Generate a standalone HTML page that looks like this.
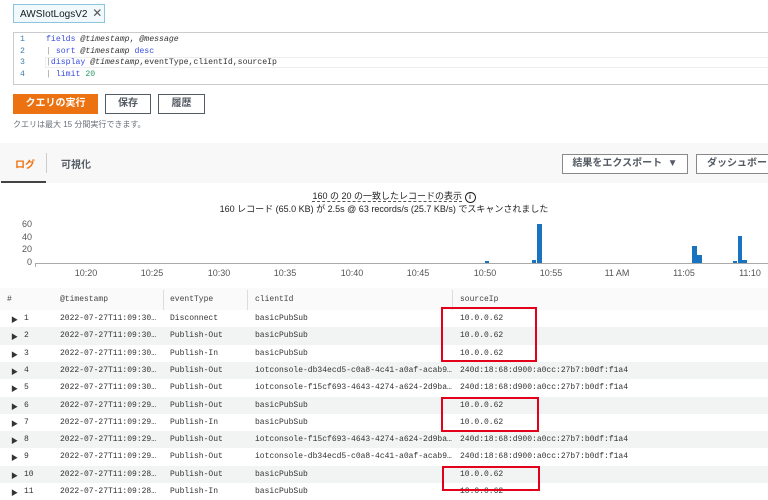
<!DOCTYPE html><html><head><meta charset="utf-8"><style>
body{margin:0;width:768px;height:493px;overflow:hidden;background:#fff;font-family:"Liberation Sans","Noto Sans CJK JP",sans-serif;position:relative;color:#16191f}
.a{position:absolute;white-space:nowrap}
.mono{font-family:"Liberation Mono","Noto Sans CJK JP",monospace}
.btn{position:absolute;border:1px solid #545b64;background:#fff;font-size:10px;font-weight:bold;color:#545b64;text-align:center;box-sizing:border-box;white-space:nowrap;overflow:hidden}
.row{position:absolute;left:0;width:768px;height:17.3px;font-size:8px;color:#333}
.row span{position:absolute;top:4px;white-space:nowrap}
.row span.t{font-size:7px;top:5px;left:11px}
.row span.n{left:24px}
.g{background:#f2f3f3}
.red{position:absolute;border:2px solid #e2001a;box-sizing:border-box}
.yl{position:absolute;left:18px;font-size:9px;color:#555;width:14px;text-align:right}
.xl{position:absolute;top:268px;font-size:9px;color:#555;width:40px;text-align:center}
.bar{position:absolute;background:#1a73c1}
</style></head><body>
<div class="a" style="left:13px;top:4px;width:92px;height:19px;border:1px solid #8cc4e0;background:#f1f9fd;box-sizing:border-box;font-size:10px;line-height:17px;padding-left:6px">AWSIotLogsV2 <span style="font-size:12px;color:#555;margin-left:2px">✕</span></div>
<div class="a" style="left:13px;top:32px;width:760px;height:53px;border:1px solid #c9cccf;box-sizing:border-box"></div>
<div class="a" style="left:45px;top:57px;width:723px;height:11px;border:1px solid #eee;border-right:none;box-sizing:border-box"></div>
<div class="a mono" style="left:20px;top:34px;font-size:8.2px;line-height:11.7px;color:#3f7cac">1<br>2<br>3<br>4</div>
<div class="a mono" style="left:46px;top:34px;font-size:8.2px;line-height:11.7px;color:#333;white-space:pre"><span style="color:#3b4ee0">fields</span> <i>@timestamp</i>, <i>@message</i>
<span style="color:#999">|</span> <span style="color:#3b4ee0">sort</span> <i>@timestamp</i> <span style="color:#3b4ee0">desc</span>
<span style="color:#999">|</span><span style="color:#3b4ee0">display</span> <i>@timestamp</i>,eventType,clientId,sourceIp
<span style="color:#999">|</span> <span style="color:#3b4ee0">limit</span> <span style="color:#2a9a6a">20</span></div>
<div class="btn" style="left:13px;top:94px;width:85px;height:20px;background:#ec7211;border-color:#ec7211;color:#fff;line-height:18px">クエリの実行</div>
<div class="btn" style="left:105px;top:94px;width:46px;height:20px;line-height:18px">保存</div>
<div class="btn" style="left:158px;top:94px;width:47px;height:20px;line-height:18px">履歴</div>
<div class="a" style="left:13px;top:119px;font-size:8px;color:#687078">クエリは最大 15 分間実行できます。</div>
<div class="a" style="left:0;top:143px;width:768px;height:40px;background:#f8f8f8"></div>
<div class="a" style="left:15px;top:156px;font-size:10px;font-weight:bold;color:#ec7211">ログ</div>
<div class="a" style="left:46px;top:153px;width:1px;height:20px;background:#ccc"></div>
<div class="a" style="left:61px;top:156px;font-size:10px;font-weight:bold;color:#545b64">可視化</div>
<div class="a" style="left:1px;top:181px;width:45px;height:2px;background:#444"></div>
<div class="btn" style="left:562px;top:154px;width:126px;height:20px;line-height:18px;border-color:#888">結果をエクスポート &nbsp;▼</div>
<div class="btn" style="left:696px;top:154px;width:80px;height:20px;line-height:18px;border-color:#888;text-align:left;padding-left:10px">ダッシュボード</div>
<div class="a" style="left:0;top:190px;width:768px;text-align:center;font-size:9px;line-height:13px;color:#222"><span style="border-bottom:1px dashed #555;margin-left:20px">160 の 20 の一致したレコードの表示</span> <span style="display:inline-block;width:9px;height:9px;border:1px solid #222;border-radius:50%;font-size:7px;line-height:9px;font-weight:bold">i</span><br><span>160 レコード (65.0 KB) が 2.5s @ 63 records/s (25.7 KB/s) でスキャンされました</span></div>
<div class="yl" style="top:219px">60</div><div class="yl" style="top:232px">40</div><div class="yl" style="top:244px">20</div><div class="yl" style="top:257px">0</div>
<div class="a" style="left:35px;top:263px;width:733px;height:1px;background:#aaa"></div>
<div class="a" style="left:35px;top:263px;width:1px;height:4px;background:#aaa"></div>
<div class="xl" style="left:66px">10:20</div><div class="xl" style="left:132px">10:25</div><div class="xl" style="left:199px">10:30</div><div class="xl" style="left:265px">10:35</div><div class="xl" style="left:332px">10:40</div><div class="xl" style="left:398px">10:45</div><div class="xl" style="left:465px">10:50</div><div class="xl" style="left:531px">10:55</div><div class="xl" style="left:597px">11 AM</div><div class="xl" style="left:664px">11:05</div><div class="xl" style="left:730px">11:10</div>
<div class="bar" style="left:485px;top:261px;width:4px;height:2px"></div>
<div class="bar" style="left:532px;top:260px;width:4px;height:3px"></div>
<div class="bar" style="left:537px;top:224px;width:5px;height:39px"></div>
<div class="bar" style="left:692px;top:246px;width:5px;height:17px"></div>
<div class="bar" style="left:697px;top:255px;width:5px;height:8px"></div>
<div class="bar" style="left:733px;top:261px;width:4px;height:2px"></div>
<div class="bar" style="left:738px;top:236px;width:4px;height:27px"></div>
<div class="bar" style="left:742px;top:260px;width:5px;height:3px"></div>
<div class="a" style="left:0;top:288px;width:768px;height:22px;background:#fafafa"></div>
<div class="a mono" style="top:295px;left:7px;font-size:8px;color:#444">#</div>
<div class="a mono" style="top:295px;left:60px;font-size:8px;color:#444">@timestamp</div>
<div class="a mono" style="top:295px;left:170px;font-size:8px;color:#444">eventType</div>
<div class="a mono" style="top:295px;left:255px;font-size:8px;color:#444">clientId</div>
<div class="a mono" style="top:295px;left:460px;font-size:8px;color:#444">sourceIp</div>
<div class="a" style="left:163px;top:290px;width:1px;height:20px;background:#ddd"></div>
<div class="a" style="left:247px;top:290px;width:1px;height:20px;background:#ddd"></div>
<div class="a" style="left:452px;top:290px;width:1px;height:20px;background:#ddd"></div>
<div class="mono">
<div class="row" style="top:310px"><span class="t">▶</span><span class="n">1</span><span style="left:60px">2022-07-27T11:09:30…</span><span style="left:170px">Disconnect</span><span style="left:255px">basicPubSub</span><span style="left:460px">10.0.0.62</span></div>
<div class="row g" style="top:327.3px"><span class="t">▶</span><span class="n">2</span><span style="left:60px">2022-07-27T11:09:30…</span><span style="left:170px">Publish-Out</span><span style="left:255px">basicPubSub</span><span style="left:460px">10.0.0.62</span></div>
<div class="row" style="top:344.6px"><span class="t">▶</span><span class="n">3</span><span style="left:60px">2022-07-27T11:09:30…</span><span style="left:170px">Publish-In</span><span style="left:255px">basicPubSub</span><span style="left:460px">10.0.0.62</span></div>
<div class="row g" style="top:361.9px"><span class="t">▶</span><span class="n">4</span><span style="left:60px">2022-07-27T11:09:30…</span><span style="left:170px">Publish-Out</span><span style="left:255px">iotconsole-db34ecd5-c0a8-4c41-a0af-acab9…</span><span style="left:460px">240d:18:68:d900:a0cc:27b7:b0df:f1a4</span></div>
<div class="row" style="top:379.2px"><span class="t">▶</span><span class="n">5</span><span style="left:60px">2022-07-27T11:09:30…</span><span style="left:170px">Publish-Out</span><span style="left:255px">iotconsole-f15cf693-4643-4274-a624-2d9ba…</span><span style="left:460px">240d:18:68:d900:a0cc:27b7:b0df:f1a4</span></div>
<div class="row g" style="top:396.5px"><span class="t">▶</span><span class="n">6</span><span style="left:60px">2022-07-27T11:09:29…</span><span style="left:170px">Publish-Out</span><span style="left:255px">basicPubSub</span><span style="left:460px">10.0.0.62</span></div>
<div class="row" style="top:413.8px"><span class="t">▶</span><span class="n">7</span><span style="left:60px">2022-07-27T11:09:29…</span><span style="left:170px">Publish-In</span><span style="left:255px">basicPubSub</span><span style="left:460px">10.0.0.62</span></div>
<div class="row g" style="top:431.1px"><span class="t">▶</span><span class="n">8</span><span style="left:60px">2022-07-27T11:09:29…</span><span style="left:170px">Publish-Out</span><span style="left:255px">iotconsole-f15cf693-4643-4274-a624-2d9ba…</span><span style="left:460px">240d:18:68:d900:a0cc:27b7:b0df:f1a4</span></div>
<div class="row" style="top:448.4px"><span class="t">▶</span><span class="n">9</span><span style="left:60px">2022-07-27T11:09:29…</span><span style="left:170px">Publish-Out</span><span style="left:255px">iotconsole-db34ecd5-c0a8-4c41-a0af-acab9…</span><span style="left:460px">240d:18:68:d900:a0cc:27b7:b0df:f1a4</span></div>
<div class="row g" style="top:465.7px"><span class="t">▶</span><span class="n">10</span><span style="left:60px">2022-07-27T11:09:28…</span><span style="left:170px">Publish-Out</span><span style="left:255px">basicPubSub</span><span style="left:460px">10.0.0.62</span></div>
<div class="row" style="top:483px"><span class="t">▶</span><span class="n">11</span><span style="left:60px">2022-07-27T11:09:28…</span><span style="left:170px">Publish-In</span><span style="left:255px">basicPubSub</span><span style="left:460px">10.0.0.62</span></div>
</div>
<div class="red" style="left:441px;top:307px;width:96px;height:55px"></div>
<div class="red" style="left:441px;top:397px;width:98px;height:35px"></div>
<div class="red" style="left:442px;top:466px;width:98px;height:25px"></div>
</body></html>
